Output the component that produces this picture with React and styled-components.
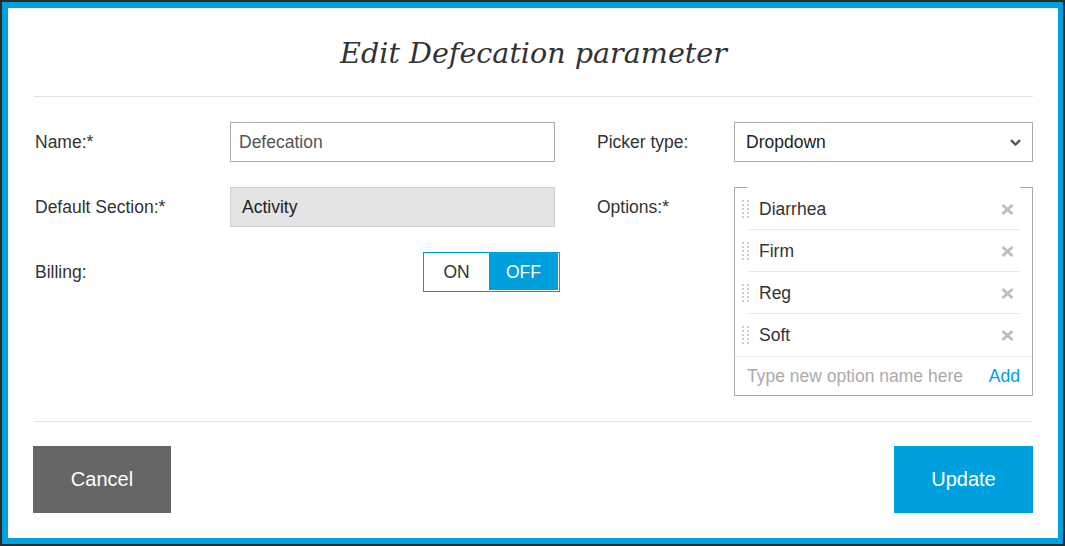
import React from 'react'
import styled, { createGlobalStyle } from 'styled-components'

const GlobalStyle = createGlobalStyle`
  html, body {
    margin: 0;
    padding: 0;
    background: #2b2b2b;
  }

  * {
    box-sizing: border-box;
  }
`

const blue = '#00a0df'

const Frame = styled.div`
  width: 1065px;
  height: 546px;
  padding: 2px;
  background: #2b2b2b;
`

const Modal = styled.div`
  height: 100%;
  background: #fff;
  border: solid ${blue};
  border-width: 6px 5px 6px 6px;
  padding: 0 25px 0 26px;
  display: flex;
  flex-direction: column;
  font-family: "Liberation Sans", Arial, sans-serif;
  font-size: 17.5px;
  color: #333;
`

const Header = styled.header`
  height: 88px;
  flex: none;
  display: flex;
  align-items: center;
  justify-content: center;
  padding-top: 1px;
`

const Title = styled.h1`
  margin: 0;
  font-family: "DejaVu Serif", Georgia, serif;
  font-style: italic;
  font-weight: normal;
  font-size: 28.6px;
  color: #333;
`

const Rule = styled.hr`
  margin: 0;
  border: 0;
  height: 1px;
  flex: none;
  background: #e2e2e2;
`

const Body = styled.div`
  display: flex;
  gap: 37px;
  padding: 25px 0;
`

const Column = styled.div`
  width: ${p => p.$width}px;
  display: flex;
  flex-direction: column;
  gap: 25px;
`

const Field = styled.div`
  display: flex;
  align-items: flex-start;
`

const Label = styled.label`
  width: ${p => p.$width}px;
  flex: none;
  height: 40px;
  line-height: 40px;
  padding-left: 1px;
`

const Control = styled.div`
  flex: 1;
  display: flex;
  justify-content: ${p => (p.$end ? 'flex-end' : 'flex-start')};
`

const TextBox = styled.div`
  width: ${p => p.$width || 325}px;
  height: 40px;
  line-height: 38px;
  padding: 0 ${p => (p.$pad || 8)}px;
  border: 1px solid ${p => (p.$disabled ? '#cfcfcf' : '#aaa')};
  background: ${p => (p.$disabled ? '#e4e4e4' : '#fff')};
  color: ${p => p.$color || '#555'};
  display: flex;
  align-items: center;
  justify-content: space-between;
`

const Toggle = styled.div`
  width: 137px;
  height: 40px;
  margin-right: -1px;
  border: 1px solid ${blue};
  padding: 0 1px 1px 0;
  display: flex;
`

const ToggleSide = styled.div`
  width: ${p => p.$width}px;
  flex: ${p => (p.$active ? 1 : 'none')};
  display: flex;
  align-items: center;
  justify-content: center;
  padding-top: 1px;
  background: ${p => (p.$active ? blue : '#fff')};
  color: ${p => (p.$active ? '#fff' : '#333')};
`

const OptionsBox = styled.div`
  position: relative;
  width: 299px;
  border: 1px solid #aaa;

  &::before {
    content: '';
    position: absolute;
    top: -1px;
    left: 12px;
    right: 12px;
    height: 1px;
    background: #fff;
  }
`

const OptionItem = styled.div`
  height: 42px;
  display: flex;
  align-items: center;
`

const Handle = styled.svg`
  flex: none;
  margin: 0 0 0 7px;
`

const OptionBody = styled.div`
  flex: 1;
  height: 100%;
  margin: 0 12px 0 0;
  padding: 1px 6px 0 10px;
  display: flex;
  align-items: center;
  justify-content: space-between;
  border-bottom: ${p => (p.$last ? 'none' : '1px solid #e6e6e6')};
  color: #333;
`

const AddRow = styled.div`
  height: 39px;
  border-top: 1px solid #e6e6e6;
  padding: 0 12px;
  display: flex;
  align-items: center;
  justify-content: space-between;
`

const Placeholder = styled.span`
  color: #aaa;
`

const AddLink = styled.span`
  color: ${blue};
`

const Footer = styled.footer`
  display: flex;
  justify-content: space-between;
  padding: 24px 0 25px;
`

const Button = styled.button`
  width: ${p => p.$width}px;
  height: 67px;
  border: 0;
  margin-left: ${p => (p.$primary ? 0 : -1)}px;
  background: ${p => (p.$primary ? blue : '#666')};
  color: #fff;
  font-family: "Liberation Sans", Arial, sans-serif;
  font-size: 20px;
  cursor: pointer;
`

function DragHandle() {
  const dots = []
  for (let r = 0; r < 5; r++) {
    for (let c = 0; c < 2; c++) {
      dots.push(<rect key={`${r}-${c}`} x={c * 5} y={r * 4} width="2" height="2" fill="#cfcfcf" />)
    }
  }
  return (
    <Handle width="7" height="18" viewBox="0 0 7 18">
      {dots}
    </Handle>
  )
}

function RemoveIcon() {
  return (
    <svg width="13" height="11" viewBox="0 0 13 11">
      <path d="M1.5 1 L11.5 10 M11.5 1 L1.5 10" stroke="#bdbdbd" strokeWidth="2.8" />
    </svg>
  )
}

function Chevron() {
  return (
    <svg width="11" height="7" viewBox="0 0 11 7">
      <path d="M1 1.2 L5.5 5.5 L10 1.2" stroke="#555" strokeWidth="2.4" fill="none" />
    </svg>
  )
}

const options = ['Diarrhea', 'Firm', 'Reg', 'Soft']

export default function App() {
  return (
    <>
      <GlobalStyle />
      <Frame>
        <Modal>
          <Header>
            <Title>Edit Defecation parameter</Title>
          </Header>
          <Rule />

          <Body>
            <Column $width={525}>
              <Field>
                <Label $width={196}>Name:*</Label>
                <Control>
                  <TextBox>Defecation</TextBox>
                </Control>
              </Field>
              <Field>
                <Label $width={196}>Default Section:*</Label>
                <Control>
                  <TextBox $disabled $pad={11} $color="#222">Activity</TextBox>
                </Control>
              </Field>
              <Field>
                <Label $width={196}>Billing:</Label>
                <Control $end>
                  <Toggle>
                    <ToggleSide $width={65}>ON</ToggleSide>
                    <ToggleSide $active>OFF</ToggleSide>
                  </Toggle>
                </Control>
              </Field>
            </Column>

            <Column $width={437}>
              <Field>
                <Label $width={138}>Picker type:</Label>
                <Control>
                  <TextBox $width={299} $pad={11} $color="#222">
                    Dropdown
                    <Chevron />
                  </TextBox>
                </Control>
              </Field>
              <Field>
                <Label $width={138}>Options:*</Label>
                <Control>
                  <OptionsBox>
                    {options.map((o, i) => (
                      <OptionItem key={o}>
                        <DragHandle />
                        <OptionBody $last={i === options.length - 1}>
                          {o}
                          <RemoveIcon />
                        </OptionBody>
                      </OptionItem>
                    ))}
                    <AddRow>
                      <Placeholder>Type new option name here</Placeholder>
                      <AddLink>Add</AddLink>
                    </AddRow>
                  </OptionsBox>
                </Control>
              </Field>
            </Column>
          </Body>

          <Rule />
          <Footer>
            <Button $width={138}>Cancel</Button>
            <Button $width={139} $primary>Update</Button>
          </Footer>
        </Modal>
      </Frame>
    </>
  )
}
